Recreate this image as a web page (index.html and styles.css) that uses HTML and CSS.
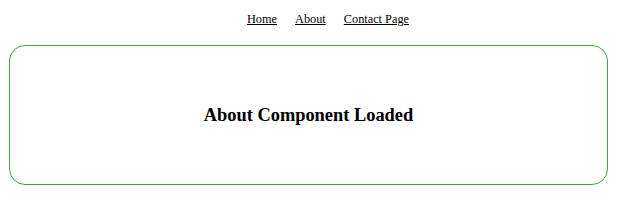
FILE: index.html
```html
<!DOCTYPE html>
<html lang="en">

<head>
    <meta charset="UTF-8">
    <meta name="viewport" content="width=device-width, initial-scale=1.0">
    <title>About</title>
    <link rel="stylesheet" href="styles.css">
</head>

<body>
    <!-- Top navigation -->
    <nav class="nav">
        <a href="#">Home</a>
        <a href="#">About</a>
        <a href="#">Contact Page</a>
    </nav>

    <!-- Routed component -->
    <div class="outlet">
        <h2>About Component Loaded</h2>
    </div>
</body>

</html>
```

FILE: styles.css
```css
body {
    font-family: 'Liberation Serif', 'Times New Roman', serif;
    background-color: #fff;
    color: #000;
    margin: 0;
}

.nav {
    display: flex;
    justify-content: center;
    gap: 18px;
    padding: 12px 0 0 32px;
    height: 45px;
    box-sizing: border-box;
    font-size: 12.3px;
}

.nav a {
    color: #000;
    text-decoration: underline;
}

.outlet {
    width: 599px;
    height: 140px;
    margin-left: 9px;
    box-sizing: border-box;
    border: 1.3px solid #3daa3d;
    border-radius: 16px;
    display: flex;
    align-items: center;
    justify-content: center;
}

.outlet h2 {
    margin: 0;
    font-size: 18.4px;
    font-weight: bold;
}
```
